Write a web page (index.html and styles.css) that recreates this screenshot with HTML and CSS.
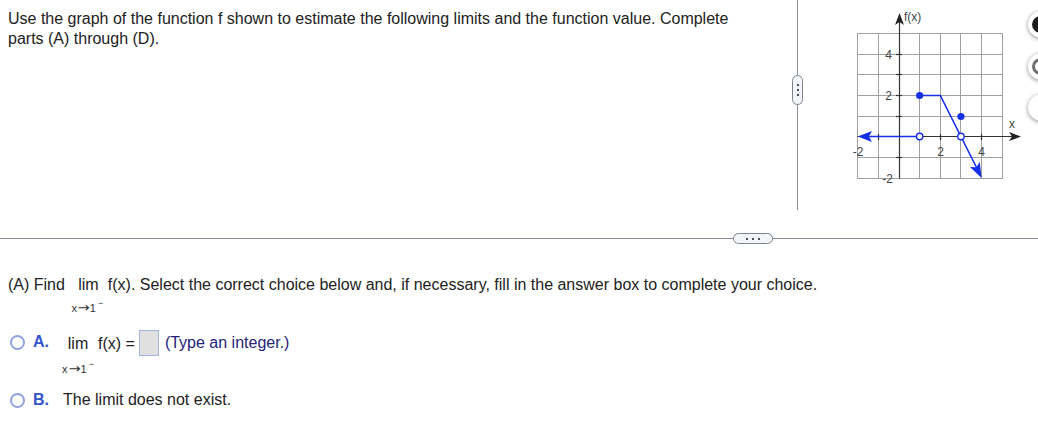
FILE: index.html
```html
<!DOCTYPE html>
<html>
<head>
<meta charset="utf-8">
<link rel="stylesheet" href="styles.css">
</head>
<body>
<div class="top">
  <div class="left">
    <p class="intro">Use the graph of the function f shown to estimate the following limits and the function value. Complete parts (A) through (D).</p>
  </div>
  <div class="right">
    <svg class="graph" width="198" height="190" viewBox="0 0 198 190">
      <g class="grid">
        <rect x="18.5" y="33.5" width="145" height="145" fill="none"/>
        <line x1="39.5" y1="33.5" x2="39.5" y2="178.5"/>
        <line x1="80.5" y1="33.5" x2="80.5" y2="178.5"/>
        <line x1="101.5" y1="33.5" x2="101.5" y2="178.5"/>
        <line x1="121.5" y1="33.5" x2="121.5" y2="178.5"/>
        <line x1="142.5" y1="33.5" x2="142.5" y2="178.5"/>
        <line x1="18.5" y1="54.5" x2="163.5" y2="54.5"/>
        <line x1="18.5" y1="74.5" x2="163.5" y2="74.5"/>
        <line x1="18.5" y1="95.5" x2="163.5" y2="95.5"/>
        <line x1="18.5" y1="116.5" x2="163.5" y2="116.5"/>
        <line x1="18.5" y1="157.5" x2="163.5" y2="157.5"/>
      </g>
      <g class="axes">
        <line x1="60.5" y1="178.5" x2="60.5" y2="22"/>
        <line x1="18.5" y1="136.5" x2="174" y2="136.5"/>
        <line x1="57" y1="54.5" x2="63" y2="54.5"/>
        <line x1="57" y1="74.5" x2="63" y2="74.5"/>
        <line x1="57" y1="95.5" x2="63" y2="95.5"/>
        <line x1="57" y1="116.5" x2="63" y2="116.5"/>
        <line x1="57" y1="157.5" x2="63" y2="157.5"/>
        <line x1="39.5" y1="134" x2="39.5" y2="140"/>
        <line x1="80.5" y1="134" x2="80.5" y2="140"/>
        <line x1="101.5" y1="134" x2="101.5" y2="140"/>
        <line x1="121.5" y1="134" x2="121.5" y2="140"/>
        <line x1="142.5" y1="134" x2="142.5" y2="140"/>
      </g>
      <polygon class="arrow" points="60.5,13 56,25 60.5,22 65,25"/>
      <polygon class="arrow" points="182,136.5 170,132 173,136.5 170,141"/>
      <text class="lbl" x="65" y="21">f(x)</text>
      <text class="lbl" x="170" y="128">x</text>
      <text class="lbl" x="53" y="59" text-anchor="end">4</text>
      <text class="lbl" x="53" y="100" text-anchor="end">2</text>
      <text class="lbl" x="54" y="183" text-anchor="end">-2</text>
      <text class="lbl" x="19" y="156" text-anchor="middle">-2</text>
      <text class="lbl" x="101.5" y="156" text-anchor="middle">2</text>
      <text class="lbl" x="142.5" y="156" text-anchor="middle">4</text>
      <g class="fn">
        <line x1="80.65" y1="136.5" x2="31" y2="136.5"/>
        <polyline points="80.65,95.5 101.3,95.5 137.5,167.5" fill="none"/>
      </g>
      <polygon class="fnfill" points="18.7,136.5 33,131 30,136.5 33,142"/>
      <polygon class="fnfill" points="142.6,178 131,167.1 137.2,167.3 140.8,162.1"/>
      <circle class="fnfill" cx="80.65" cy="95.5" r="3.6"/>
      <circle class="fnfill" cx="121.95" cy="116.5" r="3.6"/>
      <circle class="open" cx="80.65" cy="136.5" r="3.2"/>
      <circle class="open" cx="121.95" cy="136.5" r="3.2"/>
    </svg>
  </div>
  <div class="vhandle"><i></i><i></i><i></i></div>
</div>
<div class="hsplit">
  <div class="hhandle"><i></i><i></i><i></i></div>
</div>
<div class="part">
  <p class="question">(A) Find <span class="lim lim-q"><span class="lim-word">lim</span><span class="lim-sub">x<span class="arr">→</span>1<span class="minus">−</span></span></span> f(x). Select the correct choice below and, if necessary, fill in the answer box to complete your choice.</p>
  <div class="choice choice-a">
    <span class="radio"></span>
    <span class="letter">A.</span>
    <span class="lim lim-a"><span class="lim-word">lim</span><span class="lim-sub">x<span class="arr">→</span>1<span class="minus">−</span></span></span>
    <span class="expr">f(x) =</span>
    <span class="answer"></span>
    <span class="hint">(Type an integer.)</span>
  </div>
  <div class="choice choice-b">
    <span class="radio"></span>
    <span class="letter">B.</span>
    <span class="btext">The limit does not exist.</span>
  </div>
</div>
<div class="fab fab1"><span></span></div>
<div class="fab fab2"><span></span></div>
<div class="fab fab3"></div>
</body>
</html>
```

FILE: styles.css
```css
html, body {
  margin: 0;
  padding: 0;
  background: #ffffff;
  overflow: hidden;
}
body {
  width: 1038px;
  height: 438px;
  position: relative;
  font-family: "Liberation Sans", Arial, sans-serif;
  font-size: 16px;
  color: #222222;
}
.top {
  display: flex;
  height: 238px;
  position: relative;
}
.left {
  width: 798px;
  height: 210px;
  border-right: 1px solid #8a9099;
  box-sizing: border-box;
  padding: 9px 8px 0 8px;
}
.intro {
  margin: 0;
  width: 760px;
  line-height: 20px;
}
.right {
  flex: 1;
  padding-left: 41px;
}
.graph {
  display: block;
}
.grid line, .grid rect {
  stroke: #a0a0a0;
  stroke-width: 1;
}
.axes line {
  stroke: #333333;
  stroke-width: 1.2;
}
.arrow {
  fill: #222222;
}
.lbl {
  font-family: "Liberation Sans", Arial, sans-serif;
  font-size: 12px;
  fill: #444444;
}
.fn line, .fn polyline {
  stroke: #1530e8;
  stroke-width: 1.6;
  fill: none;
}
.fnfill {
  fill: #1530e8;
}
.open {
  fill: #ffffff;
  stroke: #1530e8;
  stroke-width: 1.4;
}
.vhandle {
  position: absolute;
  left: 792px;
  top: 75px;
  width: 11px;
  height: 30px;
  border: 1px solid #7d838c;
  border-radius: 6px;
  background: #f3f5f8;
  display: flex;
  flex-direction: column;
  align-items: center;
  justify-content: center;
  gap: 3px;
  box-sizing: border-box;
}
.vhandle i, .hhandle i {
  display: block;
  width: 2px;
  height: 2px;
  background: #4a4f57;
}
.hsplit {
  height: 1px;
  background: #8a9099;
  position: relative;
}
.hhandle {
  position: absolute;
  left: 733px;
  top: -5px;
  width: 40px;
  height: 11px;
  border: 1px solid #7d838c;
  border-radius: 6px;
  background: #f3f5f8;
  box-sizing: border-box;
  display: flex;
  align-items: center;
  justify-content: center;
  gap: 4px;
}
.part {
  padding: 36px 8px 0 8px;
}
.question {
  margin: 0;
  line-height: 20px;
  height: 39px;
}
.lim {
  display: inline-flex;
  flex-direction: column;
  align-items: center;
  vertical-align: top;
  width: 32px;
}
.lim-q {
  margin-left: 2px;
  margin-right: 0;
}
.lim-word {
  line-height: 20px;
}
.lim-q .lim-word {
  margin-left: 2px;
}
.lim-sub {
  font-size: 11px;
  line-height: 12px;
  margin-top: 7px;
  white-space: nowrap;
  color: #333333;
}
.lim-sub .arr {
  font-family: "DejaVu Sans", sans-serif;
  font-size: 13px;
  line-height: 0;
  display: inline-block;
  transform: scaleX(1.1);
  margin: 0 1px;
}
.lim-sub .minus {
  font-size: 9px;
  vertical-align: 6px;
  line-height: 0;
  margin-left: 2px;
}
.choice {
  display: flex;
  align-items: flex-start;
  padding-left: 2px;
  line-height: 20px;
}
.choice-a {
  margin-top: 16px;
}
.choice-b {
  margin-top: 14px;
}
.radio {
  width: 15px;
  height: 15px;
  border: 2px solid #8fa3e3;
  border-radius: 50%;
  box-sizing: border-box;
  flex: none;
}
.choice-a .radio {
  margin-top: 5px;
}
.choice-b .radio {
  margin-top: 4px;
}
.letter {
  color: #3355cc;
  font-weight: bold;
  margin-left: 8px;
}
.choice-a .letter {
  width: 29px;
  margin-top: 2px;
}
.choice-b .letter {
  width: 30px;
  margin-top: 1px;
}
.btext {
  margin-top: 1px;
}
.lim-a {
  margin-top: 4px;
}
.lim-a .lim-sub {
  margin-top: 9px;
}
.expr {
  margin-left: 4px;
  margin-top: 4px;
}
.answer {
  width: 20px;
  height: 26px;
  box-sizing: border-box;
  border: 1px solid #9db5e0;
  background: #e0e0e0;
  margin-left: 4px;
}
.hint {
  margin-left: 6px;
  margin-top: 3px;
  color: #23237a;
}
.fab {
  position: absolute;
  left: 1028px;
  width: 27px;
  height: 27px;
  border-radius: 50%;
  background: #ffffff;
  box-shadow: 0 1px 4px rgba(0, 0, 0, 0.45);
}
.fab span {
  position: absolute;
  left: 4px;
  top: 5px;
  width: 18px;
  height: 17px;
  border-radius: 50%;
  box-sizing: border-box;
}
.fab1 { top: 11px; }
.fab1 span { background: #1d1d1d; }
.fab2 { top: 53px; }
.fab2 span { border: 3px solid #6f6f6f; }
.fab3 { top: 94px; }
```
